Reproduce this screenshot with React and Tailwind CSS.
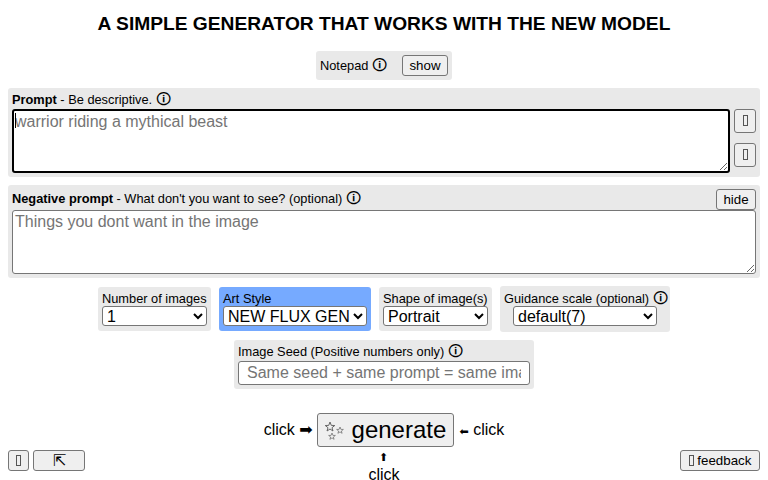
const FONT = "font-['Liberation_Sans',Arial,sans-serif]"
const BTN = 'bg-[#efefef] border border-[#767676] rounded-[3px] text-black'
const SYMBOL = "font-['DejaVu_Sans',sans-serif]"

function Info() {
  return <span className={`${SYMBOL} text-[15px] leading-none`}>🛈</span>
}

function Tofu() {
  return <span className="inline-block w-[5px] h-[11px] border border-[#555] align-[-1px]" />
}

function Stars() {
  const star = 'M0 -5 L1.3 -1.6 L4.8 -1.5 L2 .7 L3 4 L0 2 L-3 4 L-2 .7 L-4.8 -1.5 L-1.3 -1.6 Z'
  return (
    <svg width="20" height="20" viewBox="0 0 20 20" fill="none" stroke="#666" strokeWidth="1" className="inline-block align-[-3px] mr-px">
      <path d={star} transform="translate(6 6)" />
      <path d={star} transform="translate(16 9.5) scale(.7)" />
      <path d={star} transform="translate(8 15.5) scale(.7)" />
    </svg>
  )
}

function Field({ label, info, blue, className, children }) {
  return (
    <div className={`shrink-0 flex flex-col items-center rounded-[3px] px-1 ${blue ? 'bg-[#76aaff]' : 'bg-[#e9e9e9]'} ${className || ''}`}>
      <div className="self-start whitespace-nowrap text-[12.8px] leading-[15px]">
        {label} {info && <Info />}
      </div>
      {children}
    </div>
  )
}

function Select({ width, value }) {
  return (
    <select defaultValue={value} className={`${width} h-[20px] text-[16px] bg-white border border-[#767676] rounded-[3px]`}>
      <option>{value}</option>
    </select>
  )
}

export default function App() {
  return (
    <div className={`${FONT} w-[768px] h-[480px] overflow-hidden bg-white text-black flex flex-col items-center`}>
      <h1 className="shrink-0 mt-[13px] h-[22px] text-[19.2px] leading-[22px] font-bold">A SIMPLE GENERATOR THAT WORKS WITH THE NEW MODEL</h1>

      <div className="shrink-0 mt-[16px] h-[29px] w-[136px] flex items-center bg-[#e9e9e9] rounded-[3px] pl-[4px] text-[12.8px]">
        <span>Notepad <Info /></span>
        <button className={`${BTN} ml-auto mr-[4px] h-[21px] w-[46px] text-[13.33px]`}>show</button>
      </div>

      <div className="shrink-0 mt-[8px] w-[752px] h-[89px] bg-[#e9e9e9] rounded-[3px] px-[4px] pt-[3px]">
        <div className="h-[18px] text-[12.8px] leading-[18px]"><b>Prompt</b> - Be descriptive. <Info /></div>
        <div className="flex">
          <div className="relative">
            <textarea
              autoFocus
              placeholder="warrior riding a mythical beast"
              className="block w-[718px] h-[64px] px-[1px] pt-[2px] text-[16px] leading-[18px] bg-white border-2 border-black rounded-[3px] outline-none caret-transparent placeholder:text-[#757575]"
            />
            {/* text cursor */}
            <span className="absolute left-[3px] top-[4px] w-px h-[15px] bg-black" />
          </div>
          <div className="ml-[4px] flex flex-col gap-[10px]">
            <button className={`${BTN} w-[22px] h-[24px] text-[13.33px]`}><Tofu /></button>
            <button className={`${BTN} w-[22px] h-[24px] text-[13.33px]`}><Tofu /></button>
          </div>
        </div>
      </div>

      <div className="shrink-0 mt-[8px] w-[752px] h-[93px] bg-[#e9e9e9] rounded-[3px] px-[4px] pt-[4px]">
        <div className="flex h-[21px] items-start text-[12.8px] leading-[20px]">
          <div><b>Negative prompt</b> - What don't you want to see? (optional) <Info /></div>
          <button className={`${BTN} ml-auto w-[40px] h-[21px] text-[13.33px]`}>hide</button>
        </div>
        <textarea
          placeholder="Things you dont want in the image"
          className="block w-[744px] h-[64px] px-[2px] pt-[2px] text-[16px] leading-[18px] bg-white border border-[#767676] rounded-[3px] outline-none placeholder:text-[#757575]"
        />
      </div>

      <div className="shrink-0 mt-[9px] flex items-start justify-center gap-[8px]">
        <Field label="Number of images" className="pt-[4px] w-[113px] h-[44px]"><Select width="w-[105px]" value="1" /></Field>
        <Field label="Art Style" blue className="pt-[4px] w-[152px] h-[44px]"><Select width="w-[144px]" value="NEW FLUX GEN" /></Field>
        <Field label="Shape of image(s)" className="pt-[4px] w-[113px] h-[44px]"><Select width="w-[105px]" value="Portrait" /></Field>
        <Field label="Guidance scale (optional)" info className="pt-[5px] w-[170px] h-[46px] -mt-px"><Select width="w-[144px]" value="default(7)" /></Field>
      </div>

      <Field label="Image Seed (Positive numbers only)" info className="pt-[4px] mt-[8px] w-[300px] h-[49px]">
        <input
          placeholder="Same seed + same prompt = same image"
          className="mt-[2px] w-[292px] h-[24px] px-[8px] text-[16px] bg-white border border-[#767676] rounded-[3px] outline-none placeholder:text-[#757575]"
        />
      </Field>

      <div className="shrink-0 mt-[24px] flex items-center h-[34px] text-[16px]">
        <span>click <span className={SYMBOL}>➡</span></span>
        <button className={`${BTN} ml-[4px] mr-[6px] w-[137px] h-[34px] text-[24px] leading-[30px]`}><Stars /> generate</button>
        <span><span className={`${SYMBOL} text-[11px]`}>⬅</span> click</span>
      </div>

      <div className="shrink-0 mt-[3px] w-[752px] flex items-start justify-between">
        <div className="flex gap-[4px] w-[80px]">
          <button className={`${BTN} w-[21px] h-[21px] text-[13.33px]`}><Tofu /></button>
          <button className={`${BTN} w-[52px] h-[21px] text-[16px] leading-[18px]`}>⇱</button>
        </div>
        <div className="flex flex-col items-center text-[16px]">
          <span className="text-[11px] leading-[14px]">⬆</span>
          <span className="mt-[6px] leading-[10px]">click</span>
        </div>
        <button className={`${BTN} w-[80px] h-[21px] text-[13.33px]`}><Tofu /> feedback</button>
      </div>
    </div>
  )
}
